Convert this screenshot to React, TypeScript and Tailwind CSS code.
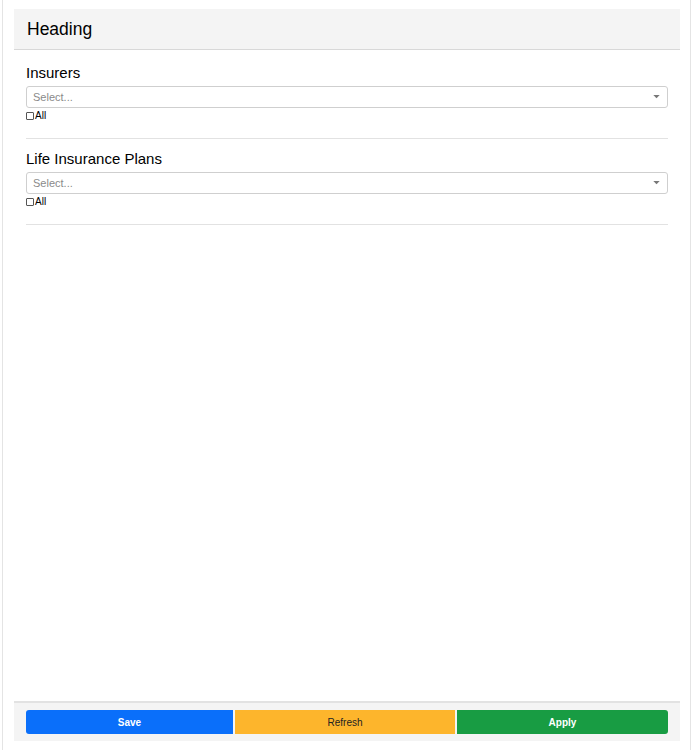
const Field = ({ label }: { label: string }) => {
  return (
    <div className="border-b border-[#e2e2e2] pt-[10px] pb-[16px]">
      <h3 className="text-[15px] leading-[20px] text-black mb-[3px]">{label}</h3>
      <div className="h-[22px] border border-[#cfcfcf] rounded-[3px] flex items-center justify-between pl-[6px] pr-[7px] bg-white">
        <span className="text-[11px] text-[#8a8a8a]">Select...</span>
        <svg width="7" height="4" viewBox="0 0 8 5">
          <path d="M0 0 H8 L4 4 Z" fill="#777" />
        </svg>
      </div>
      <label className="flex items-center gap-[1px] mt-[2px] text-[10px] leading-[12px] text-black">
        <span className="inline-block w-[8px] h-[8px] border border-[#555] rounded-[1px]" />
        All
      </label>
    </div>
  );
};

const App = () => {
  return (
    <div className="h-[750px] w-[694px] flex bg-white font-['Liberation_Sans',Arial,sans-serif]">
      <div className="ml-[2px] w-[689px] h-full border-l border-r border-[#e4e4e4] flex flex-col pl-[11px] pr-[10px] pt-[9px] pb-[9px]">
        <div className="flex-1 flex flex-col">
          <div className="h-[41px] bg-[#f4f4f4] border-b border-[#d8d8d8] flex items-center px-[13px]">
            <h2 className="text-[17.5px] text-black">Heading</h2>
          </div>
          <div className="flex-1 px-[12px] pt-[3px]">
            <Field label="Insurers" />
            <Field label="Life Insurance Plans" />
          </div>
          <div className="h-[40px] bg-[#f4f4f4] border-t-2 border-[#e2e2e2] flex items-center gap-[2px] px-[12px]">
            <button className="h-[24px] w-[207px] rounded-l-[3px] bg-[#0a6ffa] text-white text-[10px] font-bold">
              Save
            </button>
            <button className="h-[24px] flex-1 bg-[#fdb52c] text-[#222] text-[10px]">
              Refresh
            </button>
            <button className="h-[24px] w-[211px] rounded-r-[3px] bg-[#189c43] text-white text-[10px] font-bold">
              Apply
            </button>
          </div>
        </div>
      </div>
    </div>
  );
};

export default App;
